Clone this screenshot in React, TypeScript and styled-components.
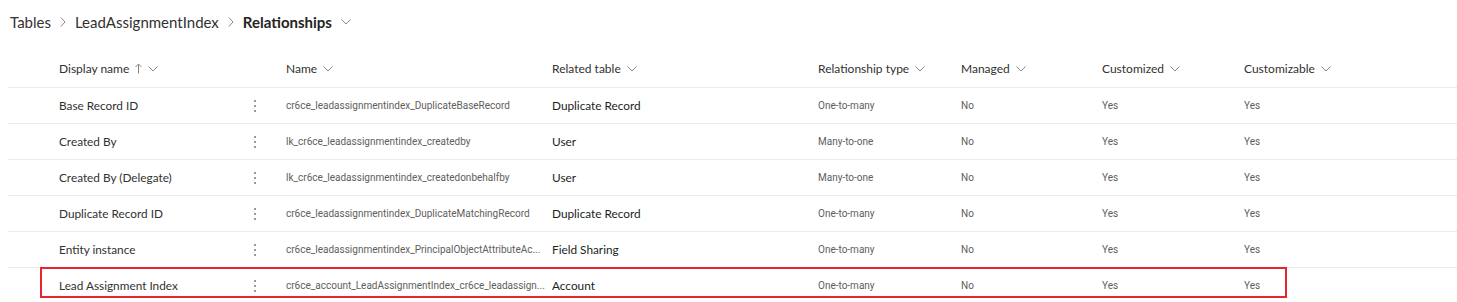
import React from "react";
import styled, { createGlobalStyle } from "styled-components";

const Global = createGlobalStyle`
  html, body { margin: 0; padding: 0; background: #ffffff; }
  body { font-family: Lato, "Open Sans", "Liberation Sans", sans-serif; color: #323130; }
`;

const Page = styled.div`
  padding: 0 0 0 8px;
  width: 1449px;
  overflow: hidden;
`;

const Breadcrumb = styled.nav`
  height: 44px;
  display: flex;
  align-items: center;
  padding-left: 2px;
  font-size: 15px;
  color: #323130;
`;

const Crumb = styled.span<{ $current?: boolean }>`
  font-weight: ${(p) => (p.$current ? 700 : 400)};
  color: ${(p) => (p.$current ? "#252423" : "#323130")};
`;

const Sep = styled.span`
  display: inline-flex;
  align-items: center;
  margin: 0 9px;
  color: #8a8886;
`;

const Table = styled.div`
  margin-top: 8px;
`;

const cols = "51px 193px 34px 266px 266px 143px 141px 142px 1fr";

const HeaderRow = styled.div`
  display: grid;
  grid-template-columns: ${cols};
  height: 36px;
  box-sizing: border-box;
  padding-bottom: 2px;
  border-bottom: 1px solid #edebe9;
  align-items: center;
  font-size: 12px;
  color: #323130;
`;

const HeaderCell = styled.div`
  display: flex;
  align-items: center;
  gap: 6px;
  white-space: nowrap;
`;

const Row = styled.div<{ $highlight?: boolean }>`
  position: relative;
  display: grid;
  grid-template-columns: ${cols};
  height: 36px;
  box-sizing: border-box;
  border-bottom: 1px solid #edebe9;
  align-items: center;
  ${(p) =>
    p.$highlight
      ? `&::after {
      content: "";
      position: absolute;
      left: 32px;
      top: -1px;
      width: 1247px;
      height: 31px;
      box-sizing: border-box;
      border: 2px solid #e6262d;
      pointer-events: none;
    }`
      : ""}
`;

const Cell = styled.div<{ $small?: boolean; $strong?: boolean }>`
  white-space: nowrap;
  overflow: hidden;
  font-family: ${(p) => (p.$small ? "Roboto, Lato, sans-serif" : "inherit")};
  font-size: ${(p) => (p.$small ? "10px" : "11.8px")};
  color: ${(p) => (p.$small ? "#605e5c" : p.$strong ? "#201f1e" : "#323130")};
  padding-right: 4px;
`;

const MoreBtn = styled.div`
  display: flex;
  align-items: center;
  padding-left: 1px;
`;

const Down = () => (
  <svg width="10" height="6" viewBox="0 0 10 6" fill="none">
    <path d="M0.5 0.5 L5 5 L9.5 0.5" stroke="#8a8886" strokeWidth="1" />
  </svg>
);

const Right = () => (
  <svg width="6" height="10" viewBox="0 0 6 10" fill="none">
    <path d="M0.8 0.5 L5 5 L0.8 9.5" stroke="#8a8886" strokeWidth="1" />
  </svg>
);

const Up = () => (
  <svg width="7" height="11" viewBox="0 0 7 11" fill="none">
    <path d="M3.5 10.5 V1 M0.5 4 L3.5 1 L6.5 4" stroke="#8a8886" strokeWidth="1" />
  </svg>
);

const Dots = () => (
  <svg width="4" height="14" viewBox="0 0 4 14">
    <circle cx="2" cy="2" r="1" fill="#7a7876" />
    <circle cx="2" cy="7" r="1" fill="#7a7876" />
    <circle cx="2" cy="12" r="1" fill="#7a7876" />
  </svg>
);

type R = {
  display: string;
  name: string;
  related: string;
  type: string;
  managed: string;
  customized: string;
  customizable: string;
};

const rows: R[] = [
  { display: "Base Record ID", name: "cr6ce_leadassignmentindex_DuplicateBaseRecord", related: "Duplicate Record", type: "One-to-many", managed: "No", customized: "Yes", customizable: "Yes" },
  { display: "Created By", name: "lk_cr6ce_leadassignmentindex_createdby", related: "User", type: "Many-to-one", managed: "No", customized: "Yes", customizable: "Yes" },
  { display: "Created By (Delegate)", name: "lk_cr6ce_leadassignmentindex_createdonbehalfby", related: "User", type: "Many-to-one", managed: "No", customized: "Yes", customizable: "Yes" },
  { display: "Duplicate Record ID", name: "cr6ce_leadassignmentindex_DuplicateMatchingRecord", related: "Duplicate Record", type: "One-to-many", managed: "No", customized: "Yes", customizable: "Yes" },
  { display: "Entity instance", name: "cr6ce_leadassignmentindex_PrincipalObjectAttributeAc...", related: "Field Sharing", type: "One-to-many", managed: "No", customized: "Yes", customizable: "Yes" },
  { display: "Lead Assignment Index", name: "cr6ce_account_LeadAssignmentIndex_cr6ce_leadassign...", related: "Account", type: "One-to-many", managed: "No", customized: "Yes", customizable: "Yes" },
];

export default function App() {
  return (
    <>
      <Global />
      <Page>
        <Breadcrumb>
          <Crumb>Tables</Crumb>
          <Sep><Right /></Sep>
          <Crumb>LeadAssignmentIndex</Crumb>
          <Sep><Right /></Sep>
          <Crumb $current>Relationships</Crumb>
          <Sep><Down /></Sep>
        </Breadcrumb>
        <Table>
          <HeaderRow>
            <div />
            <HeaderCell>Display name <Up /> <Down /></HeaderCell>
            <div />
            <HeaderCell>Name <Down /></HeaderCell>
            <HeaderCell>Related table <Down /></HeaderCell>
            <HeaderCell>Relationship type <Down /></HeaderCell>
            <HeaderCell>Managed <Down /></HeaderCell>
            <HeaderCell>Customized <Down /></HeaderCell>
            <HeaderCell>Customizable <Down /></HeaderCell>
          </HeaderRow>
          {rows.map((r, i) => (
            <Row key={r.display} $highlight={i === rows.length - 1}>
              <div />
              <Cell>{r.display}</Cell>
              <MoreBtn><Dots /></MoreBtn>
              <Cell $small>{r.name}</Cell>
              <Cell $strong>{r.related}</Cell>
              <Cell $small>{r.type}</Cell>
              <Cell $small>{r.managed}</Cell>
              <Cell $small>{r.customized}</Cell>
              <Cell $small>{r.customizable}</Cell>
            </Row>
          ))}
        </Table>
      </Page>
    </>
  );
}
